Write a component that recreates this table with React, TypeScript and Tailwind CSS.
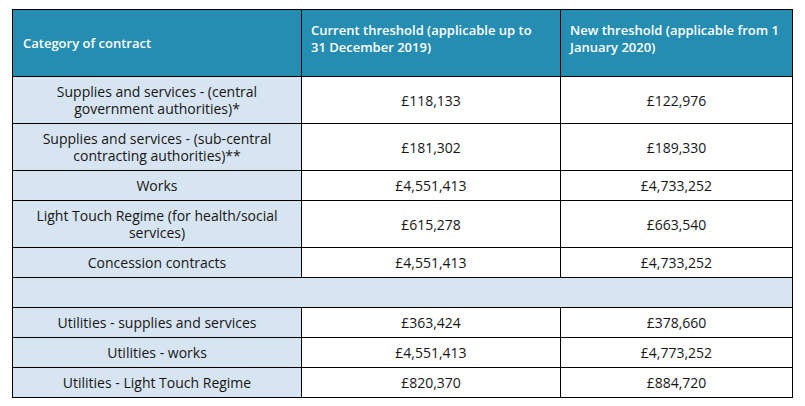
const rows: ([string, string, string] | null)[] = [
  ["Supplies and services - (central government authorities)*", "£118,133", "£122,976"],
  ["Supplies and services - (sub-central contracting authorities)**", "£181,302", "£189,330"],
  ["Works", "£4,551,413", "£4,733,252"],
  ["Light Touch Regime (for health/social services)", "£615,278", "£663,540"],
  ["Concession contracts", "£4,551,413", "£4,733,252"],
  null,
  ["Utilities - supplies and services", "£363,424", "£378,660"],
  ["Utilities - works", "£4,551,413", "£4,773,252"],
  ["Utilities - Light Touch Regime", "£820,370", "£884,720"],
];

export default function App() {
  return (
    <div className="w-[805px] h-[406px] bg-white pt-[9px] pl-[12px] font-['Open_Sans',sans-serif] text-[14px] leading-[17px] text-[#161616]">
      <table className="border-collapse table-fixed w-[780px]">
        <colgroup>
          <col className="w-[289px]" />
          <col className="w-[259px]" />
          <col className="w-[232px]" />
        </colgroup>
        <thead>
          <tr className="bg-[#258db1] text-white h-[67px] text-[13px]">
            <th className="border border-black text-left align-middle font-semibold px-[10px]">
              Category of contract
            </th>
            <th className="border border-black text-left align-top font-semibold px-[9px] pt-[12px] whitespace-nowrap">
              Current threshold (applicable up to
              <br />
              31 December 2019)
            </th>
            <th className="border border-black text-left align-top font-semibold px-[9px] pt-[12px] whitespace-nowrap">
              New threshold (applicable from 1
              <br />
              January 2020)
            </th>
          </tr>
        </thead>
        <tbody>
          {rows.map((r, i) =>
            r ? (
              <tr key={i}>
                <td className="border border-black bg-[#d7e4f1] text-center px-[14px] py-[6px]">{r[0]}</td>
                <td className="border border-black text-center px-[10px] py-[6px]">{r[1]}</td>
                <td className="border border-black text-center px-[10px] py-[6px]">{r[2]}</td>
              </tr>
            ) : (
              <tr key={i} className="h-[30px]">
                <td colSpan={3} className="border border-black bg-[#d7e4f1]" />
              </tr>
            )
          )}
        </tbody>
      </table>
    </div>
  );
}
